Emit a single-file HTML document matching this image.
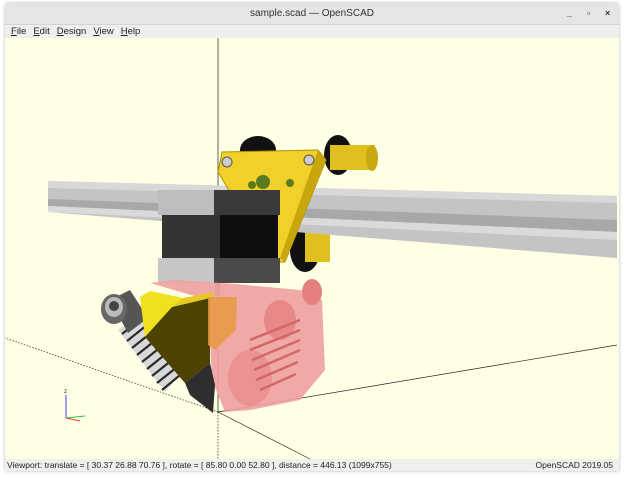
<!DOCTYPE html>
<html><head><meta charset="utf-8"><style>
body{margin:0;width:624px;height:478px;background:#fff;overflow:hidden;font-family:"Liberation Sans","DejaVu Sans",sans-serif;}
.win{position:absolute;left:5px;top:3px;width:614px;height:468px;background:#efefee;box-shadow:0 0 3px rgba(0,0,0,.3);border-radius:4px 4px 0 0;}
.title{position:absolute;left:0;top:0;width:614px;height:21px;background:#e6e5e4;border-bottom:1px solid #d4d3d2;text-align:center;font-size:10px;line-height:21px;color:#2e3436;border-radius:4px 4px 0 0;}
.ctl{position:absolute;top:0;font-size:9px;line-height:21px;color:#333;font-weight:bold}
.menu{position:absolute;left:0;top:22px;width:614px;height:13px;font-size:9.5px;line-height:13px;color:#222;}
.menu span{margin-left:6px;margin-right:1px}
.vp{position:absolute;left:0;top:35px;width:614px;height:421px;background:#ffffe5;}
.status{position:absolute;left:0;top:456px;width:614px;height:12px;font-size:8.5px;line-height:12px;color:#222;background:#efefee}
</style></head><body>
<div class="win">
<div class="title">sample.scad — OpenSCAD<span class="ctl" style="left:562px">_</span><span class="ctl" style="left:582px">▫</span><span class="ctl" style="left:600px">×</span></div>
<div class="menu"><span><u>F</u>ile</span><span><u>E</u>dit</span><span><u>D</u>esign</span><span><u>V</u>iew</span><span><u>H</u>elp</span></div>
<div class="vp"></div>
<div class="status"><span style="position:absolute;left:2px">Viewport: translate = [ 30.37 26.88 70.76 ], rotate = [ 85.80 0.00 52.80 ], distance = 446.13 (1099x755)</span><span style="position:absolute;right:6px">OpenSCAD 2019.05</span></div>
</div>
<svg width="624" height="478" style="position:absolute;left:0;top:0">
<g stroke="#222" stroke-width="0.7" fill="none">
<line x1="218" y1="38" x2="218" y2="412"/>
<line x1="218" y1="412" x2="617" y2="345"/>
<line x1="218" y1="412" x2="218" y2="459" stroke-dasharray="1.5,1.5"/>
<line x1="218" y1="412" x2="5" y2="338" stroke-dasharray="1.5,1.5"/>
<line x1="218" y1="412" x2="310" y2="459"/>
</g>
<!-- axis indicator -->
<line x1="66" y1="395" x2="66" y2="418" stroke="#4040ff"/>
<line x1="66" y1="418" x2="85" y2="416" stroke="#30c030"/>
<line x1="66" y1="418" x2="80" y2="421" stroke="#e04040"/>
<text x="64" y="393" font-size="6" fill="#333">z</text>
<!-- back wheels -->
<ellipse cx="258" cy="150" rx="18" ry="14" fill="#111"/>
<ellipse cx="338" cy="155" rx="14" ry="20" fill="#111"/>
<rect x="330" y="145" width="45" height="25" fill="#e0c020"/>
<ellipse cx="372" cy="158" rx="6" ry="13" fill="#c8a810"/>
<ellipse cx="305" cy="250" rx="15" ry="22" fill="#111"/>
<rect x="305" y="232" width="25" height="30" fill="#e0c020"/>
<!-- rail -->
<polygon points="48,181 617,196 617,258 48,212" fill="#c4c4c4"/>
<polygon points="48,181 617,196 617,203 48,188" fill="#d8d8d8"/>
<polygon points="48,199 617,220 617,232 48,206" fill="#a8a8a8"/>
<polygon points="48,206 617,232 617,240 48,212" fill="#dadada"/>
<!-- yellow plate -->
<polygon points="222,152 318,150 326,160 285,262 272,262 218,172" fill="#f2d02a" stroke="#b09000" stroke-width="1"/>
<polygon points="318,150 326,160 285,262 280,258" fill="#c9a60e"/>
<circle cx="227" cy="162" r="5" fill="#ccc" stroke="#555"/>
<circle cx="309" cy="160" r="5" fill="#ccc" stroke="#555"/>
<circle cx="252" cy="185" r="4" fill="#5a7a20"/><circle cx="263" cy="182" r="7" fill="#5a7a20"/><circle cx="290" cy="183" r="4" fill="#5a7a20"/>
<!-- motor -->
<rect x="158" y="190" width="122" height="25" fill="#bdbdbd"/>
<rect x="214" y="190" width="66" height="25" fill="#3a3a3a"/>
<rect x="162" y="215" width="116" height="43" fill="#333"/>
<rect x="220" y="215" width="58" height="43" fill="#0e0e0e"/>
<rect x="158" y="258" width="122" height="25" fill="#c6c6c6"/>
<rect x="214" y="258" width="66" height="25" fill="#4a4a4a"/>
<rect x="215" y="283" width="5" height="12" fill="#888"/>
<!-- pink hotend -->
<polygon points="150,283 175,280 235,284 300,290 322,300 325,370 300,400 250,410 225,412 212,380 208,300" fill="#f0a0a0" opacity="0.9"/>
<ellipse cx="312" cy="292" rx="10" ry="13" fill="#e58080"/>
<ellipse cx="280" cy="320" rx="16" ry="20" fill="#e88888"/>
<ellipse cx="250" cy="378" rx="22" ry="28" fill="#eb9292"/>
<g stroke="#d06868" stroke-width="2.5"><line x1="250" y1="340" x2="300" y2="320"/><line x1="250" y1="350" x2="300" y2="330"/><line x1="252" y1="360" x2="300" y2="340"/><line x1="254" y1="370" x2="300" y2="350"/><line x1="256" y1="380" x2="298" y2="362"/><line x1="260" y1="390" x2="296" y2="374"/></g>
<!-- heatsink -->
<polygon points="118,330 150,305 192,360 165,392" fill="#d8d8d8"/>
<g stroke="#2a2a2a" stroke-width="2.2">
<line x1="122" y1="334" x2="152" y2="310"/><line x1="127" y1="341" x2="157" y2="317"/><line x1="132" y1="348" x2="162" y2="324"/><line x1="137" y1="355" x2="167" y2="331"/><line x1="142" y1="362" x2="172" y2="338"/><line x1="147" y1="369" x2="177" y2="345"/><line x1="152" y1="376" x2="182" y2="352"/><line x1="157" y1="383" x2="187" y2="359"/><line x1="162" y1="390" x2="191" y2="366"/>
</g>
<polygon points="110,300 130,290 148,318 128,333" fill="#555"/>
<ellipse cx="114" cy="309" rx="13" ry="15" fill="#666"/>
<ellipse cx="114" cy="307" rx="9" ry="10" fill="#bbb"/>
<ellipse cx="114" cy="306" rx="5" ry="5" fill="#444"/>
<!-- yellow block -->
<polygon points="140,297 150,291 183,298 172,308 145,337" fill="#f0e020"/>
<polygon points="172,307 210,298 210,363 185,383 145,337" fill="#4d4200"/>
<polygon points="183,298 215,292 210,298 172,307" fill="#e8c820"/>
<polygon points="185,383 210,363 215,385 213,413 190,395" fill="#2e2e2e"/>
<polygon points="208,297 237,297 236,330 215,350 208,345" fill="#e89a40" opacity="0.85"/>
</svg>
</body></html>
